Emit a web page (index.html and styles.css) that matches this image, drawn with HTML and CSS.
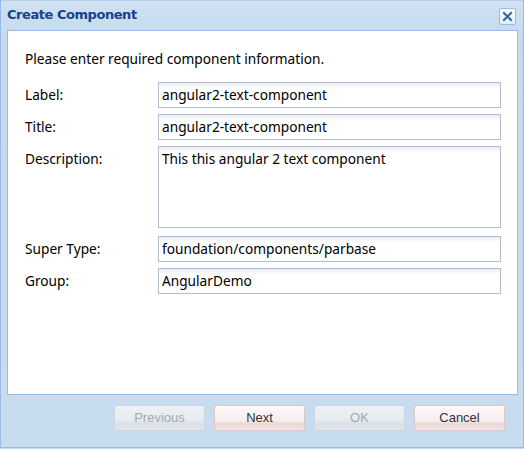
FILE: index.html
```html
<!DOCTYPE html>
<html>
<head>
<meta charset="utf-8">
<title>Create Component</title>
<link rel="stylesheet" href="styles.css">
</head>
<body>
<div class="win">
  <div class="titlebar">
    <span class="title">Create Component</span>
    <span class="close"><svg width="13" height="13" viewBox="0 0 13 13"><path d="M3 3 L10 10 M10 3 L3 10" stroke="#3a66a2" stroke-width="2.2" stroke-linecap="square" fill="none"/></svg></span>
  </div>
  <div class="panel">
    <p class="intro">Please enter required component information.</p>
    <div class="form">
      <label class="lbl">Label:</label>
      <div class="field">angular2-text-component</div>
      <label class="lbl">Title:</label>
      <div class="field">angular2-text-component</div>
      <label class="lbl">Description:</label>
      <div class="field area">This this angular 2 text component</div>
      <label class="lbl">Super Type:</label>
      <div class="field">foundation/components/parbase</div>
      <label class="lbl">Group:</label>
      <div class="field">AngularDemo</div>
    </div>
  </div>
  <div class="footer">
    <span class="btn disabled">Previous</span>
    <span class="btn">Next</span>
    <span class="btn disabled">OK</span>
    <span class="btn">Cancel</span>
  </div>
</div>
</body>
</html>
```
FILE: styles.css
```css
html, body {
  margin: 0;
  padding: 0;
  background: #c9dcef;
}
.win {
  box-sizing: border-box;
  width: 524px;
  height: 448px;
  border: 1px solid #99bbe8;
  border-top-color: #b6cde6;
  background: linear-gradient(#cfe1f3, #c6daee 40px, #c8dcef);
  display: flex;
  flex-direction: column;
  font-family: "Noto Sans", "DejaVu Sans", sans-serif;
  font-size: 13.7px;
  color: #000;
}
.titlebar {
  height: 29px;
  display: flex;
  align-items: center;
  justify-content: space-between;
  padding: 0 6px 0 6px;
}
.title {
  font-weight: bold;
  color: #15428b;
  font-size: 13px;
  font-family: "DejaVu Sans", sans-serif;
  letter-spacing: -0.45px;
  margin-top: -2px;
}
.close {
  box-sizing: border-box;
  width: 17px;
  height: 17px;
  border: 1px solid #9dbbe0;
  border-radius: 2px;
  background: linear-gradient(#ffffff, #e4eef9);
  display: flex;
  align-items: center;
  justify-content: center;
  margin-top: 2px;
  margin-right: 1px;
}
.panel {
  margin: 0 5px 0 6px;
  height: 365px;
  box-sizing: border-box;
  background: #fff;
  border: 1px solid #99bbe8;
  padding: 19px 17px 0 17px;
}
.intro {
  margin: 0;
  line-height: 17px;
}
.form {
  display: grid;
  grid-template-columns: 133px 343px;
  row-gap: 6px;
  margin-top: 15px;
  align-items: start;
}
.lbl {
  line-height: 17px;
  padding-top: 4px;
}
.field {
  box-sizing: border-box;
  height: 26px;
  border: 1px solid #b1bfd0;
  background: linear-gradient(#e9eef4, #ffffff 5px);
  padding: 3px 3px 0 3px;
  line-height: 17px;
  white-space: nowrap;
}
.field.area {
  height: 82px;
  margin-bottom: 2px;
}
.footer {
  flex: 1;
  display: flex;
  justify-content: flex-end;
  align-items: flex-start;
  gap: 9px;
  padding: 10px 18px 0 0;
}
.btn {
  box-sizing: border-box;
  width: 91px;
  height: 26px;
  border: 1px solid #dcc6c6;
  border-radius: 2px;
  background: linear-gradient(#fdfafa 0, #f7eeee 60%, #ead7d7 75%, #f3e6e6 100%);
  font-family: "Liberation Sans", Arial, sans-serif;
  font-size: 13px;
  color: #333;
  display: flex;
  align-items: center;
  justify-content: center;
  padding-bottom: 1px;
}
.btn.disabled {
  border-color: #cbd5df;
  background: linear-gradient(#eef2f6 0, #e6ebf0 60%, #d9dfe5 75%, #e3e8ed 100%);
  color: #a3a9b0;
}
```
